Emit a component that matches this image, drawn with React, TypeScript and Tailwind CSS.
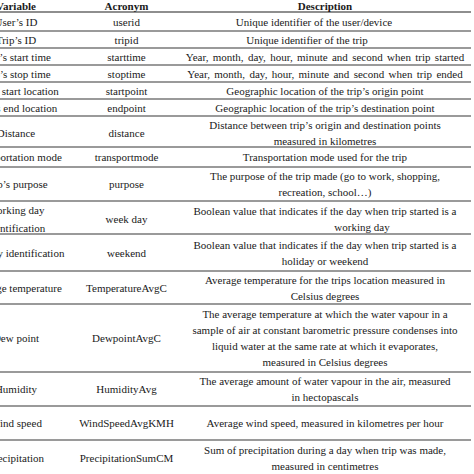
type Row = {
  v: string[];
  a: string;
  d: string[];
  h: string;
  vc?: string;
  dc?: string;
  d2?: string;
};

const rows: Row[] = [
  { v: ["User’s ID"], a: "userid", d: ["Unique identifier of the user/device"], h: "h-[19px]", dc: "pr-[22px]" },
  { v: ["Trip’s ID"], a: "tripid", d: ["Unique identifier of the trip"], h: "h-[17px]", dc: "pr-[36px]" },
  {
    v: ["Trip’s start time"],
    a: "starttime",
    d: ["Year, month, day, hour, minute and second when trip started"],
    h: "h-[17px]",
    dc: "[word-spacing:1.6px]",
  },
  {
    v: ["Trip’s stop time"],
    a: "stoptime",
    d: ["Year, month, day, hour, minute and second when trip ended"],
    h: "h-[17px]",
    dc: "[word-spacing:1.6px]",
  },
  { v: ["Trip’s start location"], a: "startpoint", d: ["Geographic location of the trip’s origin point"], h: "h-[17px]" },
  { v: ["Trip’s end location"], a: "endpoint", d: ["Geographic location of the trip’s destination point"], h: "h-[17px]" },
  {
    v: ["Distance"],
    a: "distance",
    d: ["Distance between trip’s origin and destination points", "measured in kilometres"],
    h: "h-[31px]",
  },
  { v: ["Transportation mode"], a: "transportmode", d: ["Transportation mode used for the trip"], h: "h-[20px]" },
  {
    v: ["Trip’s purpose"],
    a: "purpose",
    d: ["The purpose of the trip made (go to work, shopping,", "recreation, school…)"],
    h: "h-[34px]",
  },
  {
    v: ["Working day", "identification"],
    a: "week day",
    d: ["Boolean value that indicates if the day when trip started is a", "working day"],
    h: "h-[33px]",
    vc: "gap-[2px]",
    d2: "pl-[74px]",
  },
  {
    v: ["Holiday identification"],
    a: "weekend",
    d: ["Boolean value that indicates if the day when trip started is a", "holiday or weekend"],
    h: "h-[37px]",
  },
  {
    v: ["Average temperature"],
    a: "TemperatureAvgC",
    d: ["Average temperature for the trips location measured in", "Celsius degrees"],
    h: "h-[33px]",
  },
  {
    v: ["Dew point"],
    a: "DewpointAvgC",
    d: [
      "The average temperature at which the water vapour in a",
      "sample of air at constant barometric pressure condenses into",
      "liquid water at the same rate at which it evaporates,",
      "measured in Celsius degrees",
    ],
    h: "h-[68px]",
  },
  {
    v: ["Humidity"],
    a: "HumidityAvg",
    d: ["The average amount of water vapour in the air, measured", "in hectopascals"],
    h: "h-[34px]",
  },
  { v: ["Wind speed"], a: "WindSpeedAvgKMH", d: ["Average wind speed, measured in kilometres per hour"], h: "h-[34px]" },
  {
    v: ["Precipitation"],
    a: "PrecipitationSumCM",
    d: ["Sum of precipitation during a day when trip was made,", "measured in centimetres"],
    h: "h-[36px]",
  },
];

const cell = "flex flex-col items-center justify-center text-center whitespace-nowrap";

export default function App() {
  return (
    <div className="w-[474px] h-[474px] overflow-hidden bg-white text-[#1a1a1a] font-['Liberation_Serif','Times_New_Roman',serif] text-[11px] leading-4">
      <div className="w-[513px] ml-[-42px] mt-[-5px]">
        <div className="grid grid-cols-[116px_105px_292px] h-[18px] border-b-2 border-[#8e8e8e] font-bold">
          <div className={cell + " pt-[3px]"}>Variable</div>
          <div className={cell + " pt-[3px]"}>Acronym</div>
          <div className={cell + " pt-[3px]"}>Description</div>
        </div>
        {rows.map((r) => (
          <div key={r.a} className={"grid grid-cols-[116px_105px_292px] border-b-2 border-[#9a9a9a] " + r.h}>
            <div className={cell + " " + (r.vc ?? "")}>
              {r.v.map((t) => (
                <span key={t}>{t}</span>
              ))}
            </div>
            <div className={cell}>{r.a}</div>
            <div className={cell + " " + (r.dc ?? "")}>
              {r.d.map((t, i) => (
                <span key={t} className={i === 1 ? r.d2 ?? "" : ""}>
                  {t}
                </span>
              ))}
            </div>
          </div>
        ))}
      </div>
    </div>
  );
}
